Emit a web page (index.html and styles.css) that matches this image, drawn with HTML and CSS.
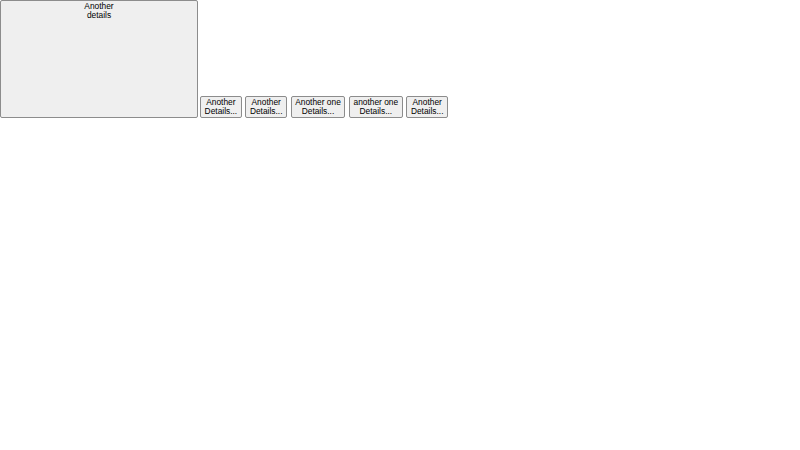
FILE: index.html
```html
<!DOCTYPE html>
<html>
<head>
<meta charset="utf-8">
<link rel="stylesheet" href="styles.css">
</head>
<body>
<div class="row">
  <button class="btn big">Another<br>details</button>
  <div class="group">
    <button class="btn small">Another<br>Details...</button>
    <button class="btn small">Another<br>Details...</button>
    <button class="btn small">Another one<br>Details...</button>
    <button class="btn small">another one<br>Details...</button>
    <button class="btn small">Another<br>Details...</button>
  </div>
</div>
</body>
</html>
```
FILE: styles.css
```css
html, body {
  margin: 0;
  padding: 0;
  background: #ffffff;
}
.row {
  display: flex;
  align-items: flex-end;
  gap: 2px;
}
.group {
  display: flex;
  gap: 3.5px;
}
.btn {
  font-family: "Liberation Sans", Arial, sans-serif;
  font-size: 8.4px;
  line-height: 9.4px;
  color: #000000;
  background: #efefef;
  border: 1px solid #8c8c8c;
  border-radius: 2px;
  margin: 0;
  text-align: center;
  box-sizing: border-box;
}
.big {
  width: 198px;
  height: 118px;
  padding: 1px 4px;
  display: flex;
  align-items: flex-start;
  justify-content: center;
}
.small {
  height: 22px;
  padding: 1px 3.6px;
  white-space: nowrap;
}
```
